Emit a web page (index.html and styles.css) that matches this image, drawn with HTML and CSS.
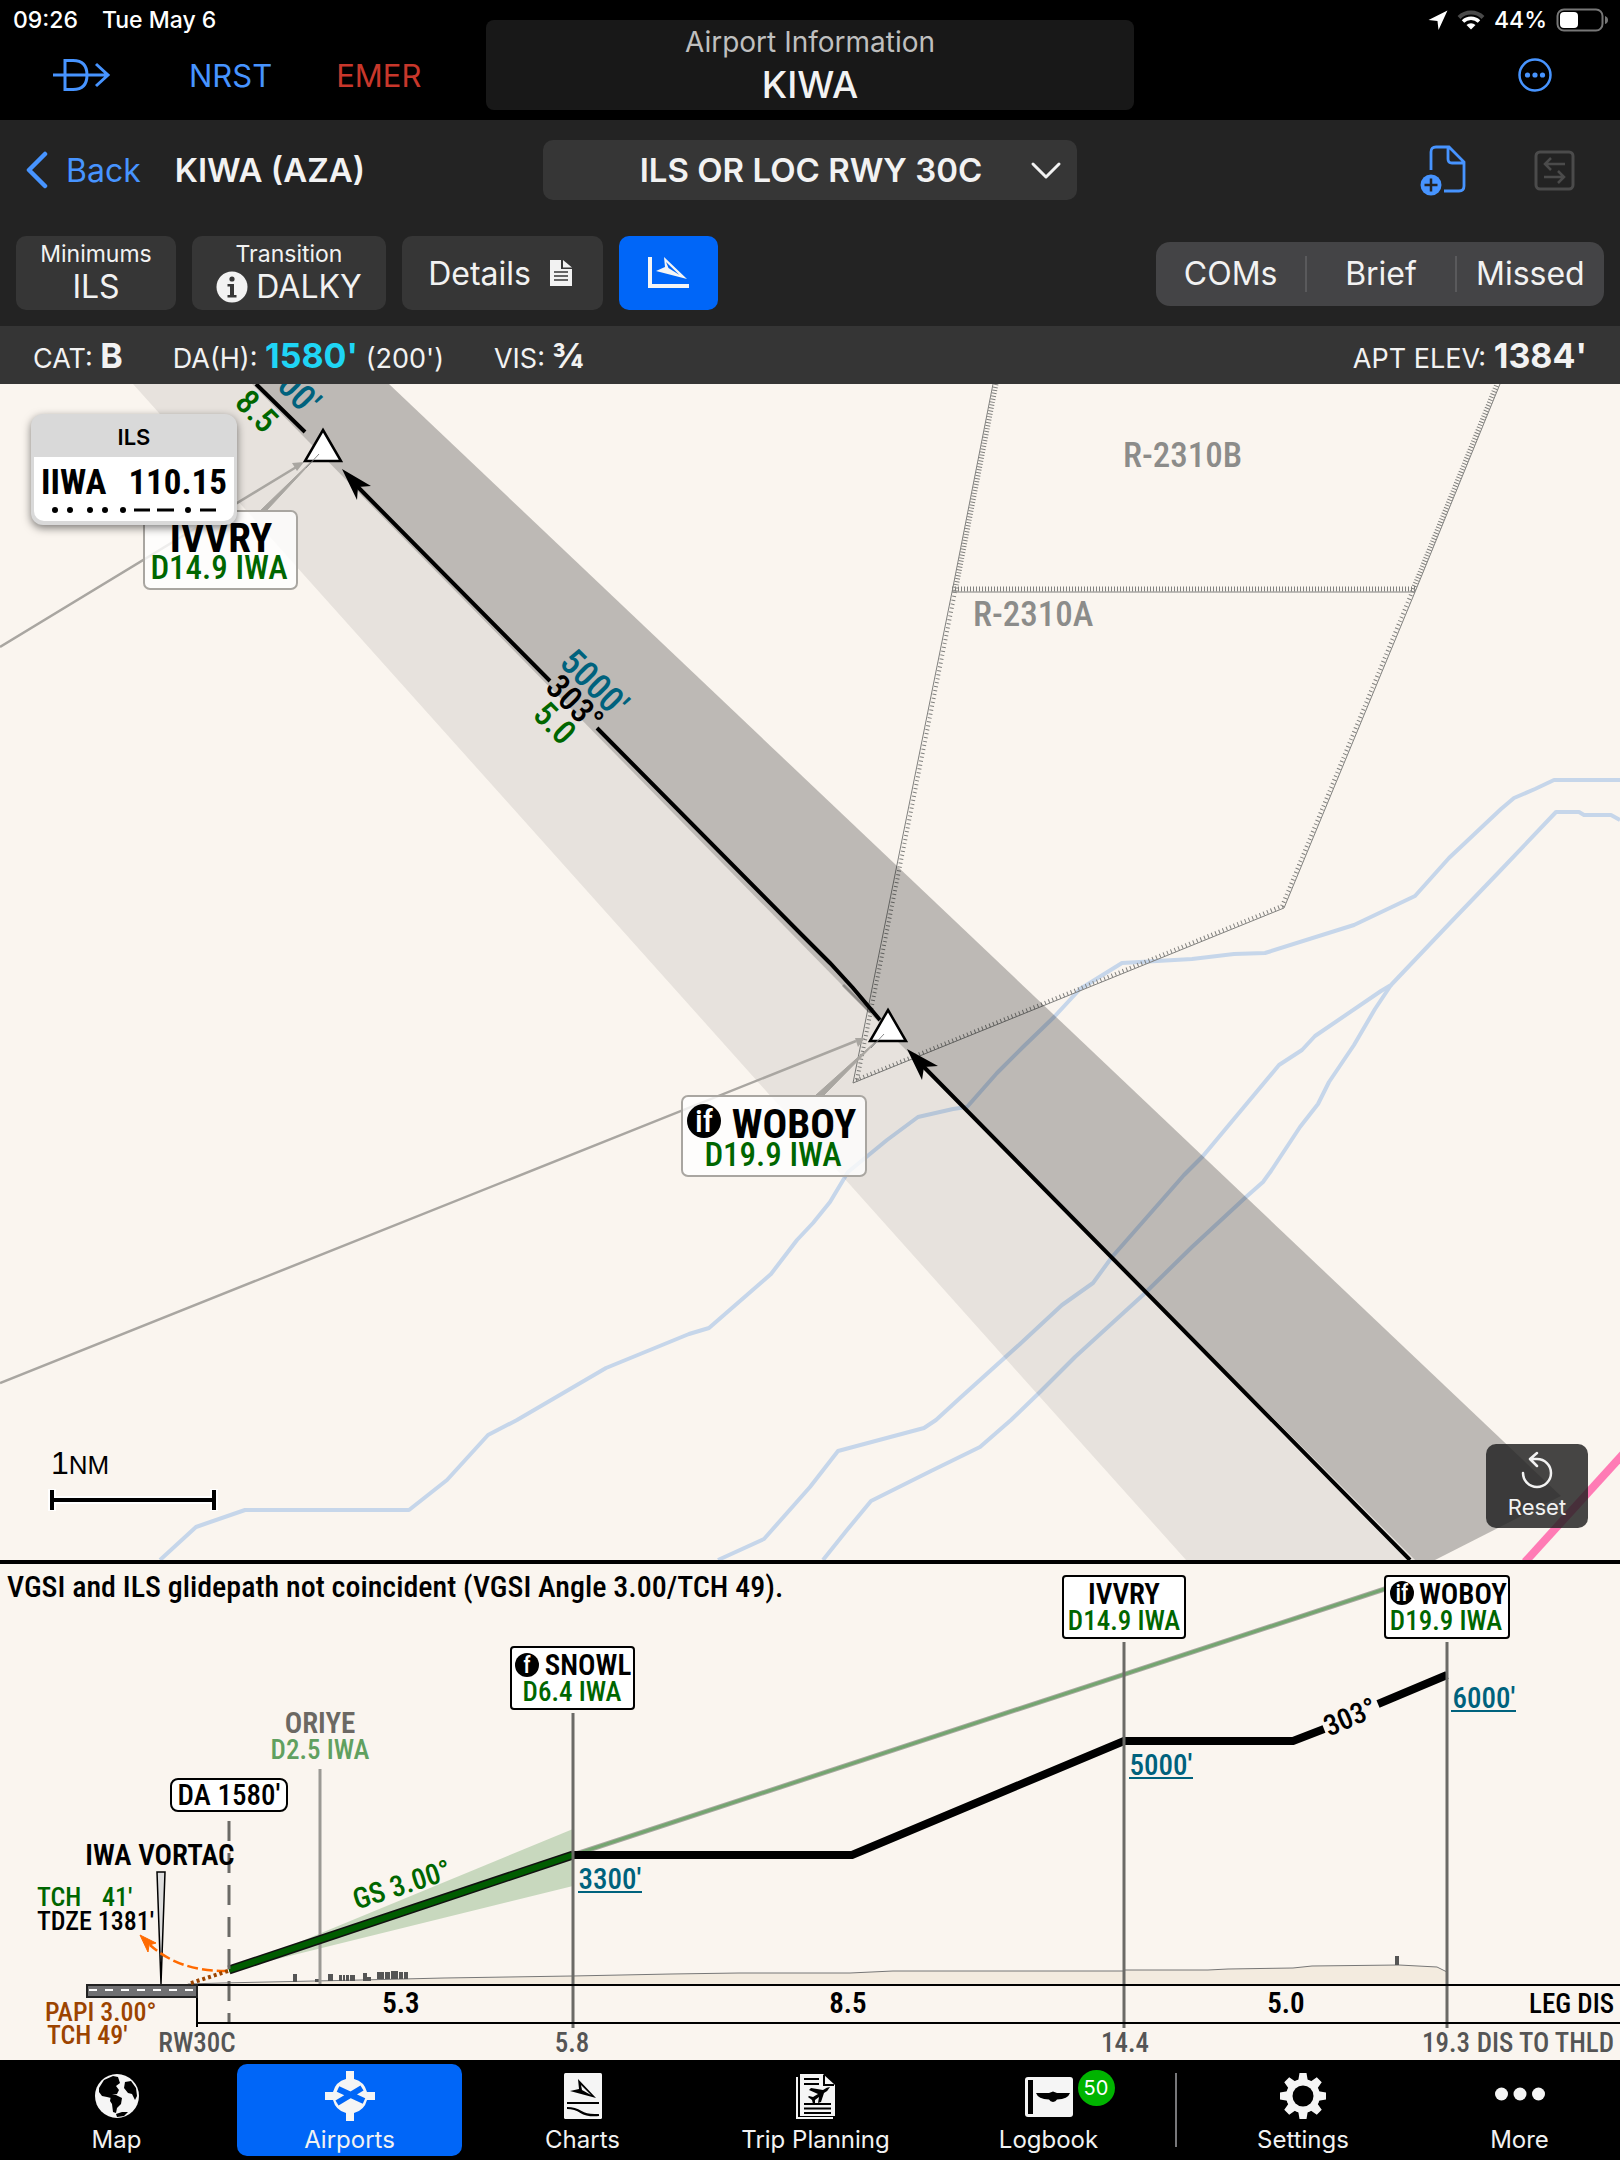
FILE: index.html
```html
<!DOCTYPE html>
<html lang="en">
<head>
<meta charset="utf-8">
<meta name="viewport" content="width=device-width, initial-scale=1">
<title>Airport Information – KIWA</title>
<link rel="stylesheet" href="styles.css">
</head>
<body>
<header class="top">
  <div class="status">
    <span class="status-time">09:26</span>
    <span class="status-date">Tue May 6</span>
    <span class="status-right">
      <svg class="ic" width="20" height="20" viewBox="0 0 19 19"><path d="M18.500.5.500 9.500l8.500 1 1 8.500z" fill="#fff"/></svg>
      <svg class="ic" width="28" height="20" viewBox="0 0 28 20"><path d="M2 7.500a17 17 0 0 1 24 0" fill="none" stroke="#4a4a4a" stroke-width="4"/><path d="M6 11.500a11.500 11.500 0 0 1 16 0" fill="none" stroke="#fff" stroke-width="3.500"/><path d="M9.500 15a6.500 6.500 0 0 1 9 0L14 19.500z" fill="#fff"/></svg>
      <span>44%</span>
      <svg class="ic" width="53" height="24" viewBox="0 0 53 24"><rect x="1.500" y="1.500" width="45" height="21" rx="6.500" fill="none" stroke="#777" stroke-width="2"/><rect x="4" y="4" width="18" height="16" rx="4" fill="#fff"/><path d="M49 8q3 1 3 4t-3 4z" fill="#777"/></svg>
    </span>
  </div>
  <div class="nav">
    <div class="nav-left">
      <button class="nav-btn direct" aria-label="Direct to"><svg width="58" height="34" viewBox="0 0 58 34" fill="none" stroke="#4794ff" stroke-width="3"><path d="M0 17h55M12 2.500h8c10 0 14 6 14 14.500S30 31.500 20 31.500h-8zM43 6l12 11-12 11"/></svg></button>
      <button class="nav-btn">NRST</button>
      <button class="nav-btn emer">EMER</button>
    </div>
    <button class="title-box"><span class="title-sub">Airport Information</span><span class="title-main">KIWA</span></button>
    <div class="nav-right">
      <button class="nav-btn" aria-label="More options"><svg width="36" height="36" viewBox="0 0 36 36"><circle cx="18" cy="18" r="15.500" fill="none" stroke="#4794ff" stroke-width="2.500"/><g fill="#4794ff"><circle cx="10.500" cy="18" r="2.600"/><circle cx="18" cy="18" r="2.600"/><circle cx="25.500" cy="18" r="2.600"/></g></svg></button>
    </div>
  </div>
</header>

<section class="tools">
  <div class="tool-row first">
    <div class="crumbs">
      <a class="back" href="#"><svg width="24" height="38" viewBox="0 0 24 38"><path d="M20 3 4 19l16 16" fill="none" stroke="#4794ff" stroke-width="4.500" stroke-linecap="round" stroke-linejoin="round"/></svg>Back</a>
      <h1 class="airport">KIWA (AZA)</h1>
    </div>
    <div class="proc">
      <select class="proc-select" aria-label="Procedure"><option>ILS OR LOC RWY 30C</option></select>
      <svg class="proc-chev" width="32" height="20" viewBox="0 0 32 20"><path d="M3 3l13 13L29 3" fill="none" stroke="#f2f2f2" stroke-width="3" stroke-linecap="round" stroke-linejoin="round"/></svg>
    </div>
    <div class="row-actions">
      <button class="icon-btn" aria-label="Add to binder"><svg width="48" height="52" viewBox="0 0 48 52"><path d="M12 25V7q0-5 5-5h13l15 15v24q0 5-5 5H25M29 3v11q0 4 4 4h11" fill="none" stroke="#4794ff" stroke-width="2.800"/><circle cx="12" cy="40" r="10.500" fill="#4794ff"/><path d="M12 33.500v13M5.500 40h13" stroke="#232323" stroke-width="2.500"/></svg></button>
      <button class="icon-btn" aria-label="Swap" disabled><svg width="42" height="42" viewBox="0 0 42 42" fill="none" stroke="#4b4b4b" stroke-width="3"><rect x="2" y="2" width="37" height="37" rx="4"/><path d="M31 14H11m6-6-6 6 6 6M10 27h20m-6-6 6 6-6 6" stroke-width="2.500"/></svg></button>
    </div>
  </div>
  <div class="tool-row second">
    <button class="chip min"><span class="chip-sub">Minimums</span><span class="chip-main">ILS</span></button>
    <button class="chip trans"><span class="chip-sub">Transition</span><span class="chip-main"><svg width="32" height="32" viewBox="0 0 32 32"><circle cx="16" cy="16" r="15.500" fill="#f2f2f2"/><circle cx="16" cy="8" r="2.600" fill="#363636"/><path d="M11.500 13H18v11h2.500v2.500h-9V24H14v-8.500h-2.500z" fill="#363636"/></svg>DALKY</span></button>
    <button class="chip details">Details<svg width="22" height="26" viewBox="0 0 22 26"><path d="M0 0h11v9h11v17H0z" fill="#f2f2f2"/><path d="M13 0l9 7.500h-9z" fill="#f2f2f2"/><path d="M4 12h14M4 16h14M4 20h14" stroke="#363636" stroke-width="1.500"/></svg></button>
    <button class="chip plate" aria-label="Profile view"><svg width="44" height="36" viewBox="0 0 44 36"><path d="M3 2v29h39" fill="none" stroke="#f5f5f5" stroke-width="4"/><path d="M17 2l23 22L9 16l9-4z" fill="#f5f5f5"/><path d="M19 7l2.500 6 11 7z" fill="#0066f8"/></svg></button>
    <div class="segments"><button>COMs</button><button>Brief</button><button>Missed</button></div>
  </div>
</section>

<section class="minima">
  <span>CAT: <b>B</b></span>
  <span>DA(H): <b class="cyan">1580'</b> (200')</span>
  <span>VIS: <b>¾</b></span>
  <span class="elev">APT ELEV: <b>1384'</b></span>
</section>

<main class="plate-view">
<section class="map">
<svg class="canvas" viewBox="0 384 1620 1176" role="img" aria-label="Approach plan view">
  <rect y="384" width="1620" height="1176" fill="#faf5ef"/>
  <g class="river">
    <path d="M1620 780H1554L1535 789 1514 798 1501 809 1449 858 1415 896 1354 925 1265 953 1234 954 1192 959 1122 963 1080 989 1054 1017 1023 1047 997 1073 967 1107 953 1109 918 1117 887 1140 848 1172 830 1202 813 1223 797 1240 771 1274 709 1328 689 1334 606 1368 517 1420 488 1435 447 1480 409 1510H245L196 1527 160 1560"/>
    <path d="M1620 820 1611 815H1584L1579 812H1556L1498 873 1449 924 1391 985 1381 991 1315 1036 1302 1050 1279 1065 1203 1156 1184 1175 1112 1257 1093 1283 1062 1305 1020 1344 960 1398 936 1420 924 1428 838 1451 810 1487 764 1539 718 1560"/>
    <path d="M1391 985 1375 1009 1354 1045 1329 1082 1318 1104 1300 1127 1271 1171 1263 1182 1246 1197 1192 1247 1143 1295 1075 1357 1040 1392 1011 1420 980 1447 931 1471 871 1501 847 1530 823 1560"/>
  </g>
  <path d="M1625 1452 1525 1562" stroke="#ff7bb5" stroke-width="8"/>
  <g class="airspace">
    <path d="M993 384 952 592 853 1083 1284 908 1415 592 1500 384M952 592H1415"/>
    <path class="ticks" d="M996 384 955 592M1412 592 1497 384M952 589H1415"/>
    <path class="ticks sparse" d="M955 592 857 1080M856 1080 1282 906 1412 592"/>
  </g>
  <path d="M133 384 1186 1560H1415L888 1032 252 384z" fill="#000" fill-opacity=".075"/>
  <path d="M389 384 1561 1496 1435 1560H1415L888 1032 252 384z" fill="#000" fill-opacity=".245"/>
  <g fill="#a9a6a1" stroke="#a9a6a1">
    <path d="M0 647 298 466M0 1383 856 1041" stroke-width="2.500" fill="none"/>
    <path d="M304 462l-7 9-5-8zM865 1038l-7 9-3-9z" stroke="none"/>
    <path d="M261 510l6 0 52-56zM816 1095l8 0 60-61z" stroke-width="1"/>
  </g>
  <rect class="tag" x="144" y="511" width="153" height="78" rx="6"/>
  <text class="c fix" x="221" y="552">IVVRY</text>
  <text class="c dme" x="219" y="579">D14.9 IWA</text>
  <rect class="tag" x="682" y="1096" width="184" height="80" rx="6"/>
  <circle cx="704" cy="1121" r="17"/>
  <text class="c badge-l" x="704" y="1132">if</text>
  <text class="c fix" x="794" y="1138">WOBOY</text>
  <text class="c dme" x="773" y="1166">D19.9 IWA</text>

  <path d="M843 985 870 1012" stroke="#000" stroke-opacity=".25" stroke-width="3"/>
  <path d="M256 384 305 432M352 481 550 681M597 728 800 933 830 963 853 988 880 1020M918 1061 1410 1560" fill="none" stroke="#000" stroke-width="4"/>
  <path d="M342 469l29 17-13 1-1 13zM907 1049l31 17-14 1-2 13z"/>
  <g fill="#fff" stroke="#000" stroke-width="2.500"><path d="M323 430 341 461H305zM888 1010 906 1041H870z"/></g>
  <path d="M319 454l-13 14M884 1034l-13 14" stroke="#888" stroke-width="1"/>

  <g class="leg">
    <text class="alt" transform="translate(594 683) rotate(45)" y="12">5000'</text>
    <text transform="translate(575 703) rotate(45)" y="12">303°</text>
    <text class="dist" transform="translate(555 723) rotate(45)" y="12">5.0</text>
    <text class="alt" transform="translate(286 381) rotate(45)" y="12">5000'</text>
    <text class="dist" transform="translate(257 411) rotate(45)" y="12">8.5</text>
  </g>
  <text class="zone" x="1123" y="467">R-2310B</text>
  <text class="zone" x="973" y="626">R-2310A</text>
  <g stroke="#fff" stroke-width="8"><path d="M50 1500H216M52 1489v22M214 1489v22"/></g>
  <path d="M50 1500H216M52 1490v20M214 1490v20" stroke="#000" stroke-width="4"/>
  <text class="scale" x="51" y="1474">1<tspan class="scale-u">NM</tspan></text>
</svg>
<aside class="navaid">
  <h2>ILS</h2>
  <div class="navaid-body">
    <p><span>IIWA</span><span>110.15</span></p>
    <svg width="166" height="8" viewBox="0 0 166 8"><g><circle cx="4" cy="4" r="3"/><circle cx="19" cy="4" r="3"/><circle cx="39" cy="4" r="3"/><circle cx="54" cy="4" r="3"/><circle cx="72" cy="4" r="3"/><circle cx="137" cy="4" r="3"/></g><path d="M83 4h16M106 4h17M149 4h16" stroke="#000" stroke-width="3"/></svg>
  </div>
</aside>
<button class="reset"><svg width="36" height="40" viewBox="0 0 36 40" fill="none" stroke="#f2f2f2" stroke-width="2.500" stroke-linecap="round" stroke-linejoin="round"><path d="M4 22a14 14 0 1 0 14-14h-6M18 2l-7 6 7 7"/></svg>Reset</button>
</section>

<section class="profile">
<svg class="canvas" viewBox="0 1564 1620 496" role="img" aria-label="Approach profile view">
  <rect y="1564" width="1620" height="496" fill="#faf5ef"/>
  <text class="c note" x="7" y="1597">VGSI and ILS glidepath not coincident (VGSI Angle 3.00/TCH 49).</text>
  <path d="M188 1984 222 1983 361 1980 444 1978 572 1976 671 1974 739 1973 850 1973 893 1971H1124V1970H1208L1228 1969 1293 1968 1312 1966 1399 1965 1437 1967 1447 1972V1984z" fill="#f3ebdf"/>
  <path d="M188 1984 222 1983 361 1980 444 1978 572 1976 671 1974 739 1973 850 1973 893 1971H1124V1970H1208L1228 1969 1293 1968 1312 1966 1399 1965 1437 1967 1447 1972" fill="none" stroke="#777" stroke-width="1"/>
  <path d="M293 1974h4v8h-4zM315 1979h4v3h-4zM328 1974h5v7h-5zM339 1975h3v6h-3zM343 1975h2v6h-2zM346 1975h3v6h-3zM350 1975h5v6h-5zM363 1973h4v4h4v4h-8zM377 1972h7v7h-7zM385 1972h5v7h-5zM391 1971h7v8h-7zM399 1972h4v7h-4zM404 1972h4v7h-4zM1395 1956h4v9h-4z" fill="#555"/>
  <path d="M229 1971 573 1829V1886z" fill="#c8d8be"/>
  <path d="M320 1769V1984" stroke="#9b9994" stroke-width="3"/>
  <path d="M573 1855 1400 1584" stroke="#a9a9a0" stroke-width="5"/>
  <path d="M573 1855 1400 1584" stroke="#74a570" stroke-width="3"/>
  <path d="M573 1855H852L1124 1741H1293L1324 1729M1378 1704 1447 1675" fill="none" stroke="#000" stroke-width="8"/>
  <path d="M229 1970 573 1855" stroke="#111" stroke-width="9"/>
  <path d="M229 1970 573 1855" stroke="#005c00" stroke-width="6"/>
  <path d="M573 1713V2028M1124 1642V2028M1447 1642V2028" stroke="#6b6a66" stroke-width="3"/>
  <path d="M229 1821V2023" stroke="#6b6a66" stroke-width="3" stroke-dasharray="20 12"/>
  <path d="M197 2027V1985H1620M197 2023H1620" fill="none" stroke="#000" stroke-width="2"/>
  <rect x="87" y="1985" width="110" height="12" fill="#707072" stroke="#222" stroke-width="2"/>
  <path d="M89 1990h106" stroke="#fff" stroke-width="2" stroke-dasharray="8 8"/>
  <path d="M157 1872h8l-4 112z" fill="#ddd" stroke="#000" stroke-width="1.500"/>
  <path d="M228 1971Q180 1972 150 1945" fill="none" stroke="#ff6a00" stroke-width="2.500" stroke-dasharray="11 4"/>
  <path d="M140 1935l16 8-7 2-1 7z" fill="#ff6a00" stroke="#ff6a00"/>
  <path d="M228 1971 188 1984" stroke="#9c4400" stroke-width="4" stroke-dasharray="3 3"/>

  <g class="box"><rect x="511" y="1647" width="123" height="62" rx="3"/><rect x="1063" y="1576" width="122" height="62" rx="3"/><rect x="1385" y="1576" width="124" height="62" rx="3"/><rect x="171" y="1779" width="116" height="32" rx="7" stroke-width="2.500"/></g>
  <circle cx="527" cy="1665" r="12"/><circle cx="1402" cy="1593" r="12"/>
  <text class="c badge-s" x="527" y="1673">f</text>
  <text class="c badge-s" x="1402" y="1601">if</text>
  <g class="pf">
    <text x="588" y="1675">SNOWL</text><text x="1124" y="1604">IVVRY</text><text x="1463" y="1604">WOBOY</text>
    <text class="dim" x="320" y="1733">ORIYE</text>
    <text x="160" y="1865">IWA VORTAC</text>
    <text x="401" y="2013">5.3</text><text x="848" y="2013">8.5</text><text x="1286" y="2013">5.0</text>
  </g>
  <g class="pn">
    <text x="229" y="1805">DA 1580'</text>
    <text class="g" transform="translate(405 1894) rotate(-18)">GS 3.00°</text>
    <text transform="translate(1354 1726) rotate(-23)">303°</text>
    <text class="b" x="610" y="1889">3300'</text><text class="b" x="1161" y="1775">5000'</text><text class="b" x="1484" y="1708">6000'</text>
  </g>
  <path d="M578 1892h64M1129 1778h64M1451 1711h65" stroke="#00627d" stroke-width="2"/>
  <g class="pd">
    <text class="g" x="572" y="1701">D6.4 IWA</text><text class="g" x="1124" y="1630">D14.9 IWA</text><text class="g" x="1446" y="1630">D19.9 IWA</text>
    <text class="g2" x="320" y="1759">D2.5 IWA</text>
    <text class="end" x="1614" y="2013">LEG DIS</text>
    <g class="t"><text x="197" y="2052">RW30C</text><text x="572" y="2052">5.8</text><text x="1125" y="2052">14.4</text><text x="1446" y="2052">19.3</text><text class="end" x="1614" y="2052">DIS TO THLD</text></g>
  </g>
  <g class="ps">
    <text class="g" x="37" y="1906">TCH</text><text class="g" x="102" y="1906">41'</text>
    <text x="37" y="1930">TDZE 1381'</text>
    <text class="p" x="45" y="2021">PAPI 3.00°</text><text class="p" x="47" y="2044">TCH 49'</text>
  </g>
</svg>
</section>
</main>

<nav class="tabs">
  <a href="#"><svg width="46" height="46" viewBox="0 0 46 46"><circle cx="23" cy="23" r="22" fill="#f5f5f5"/><path d="M5 15 10 7l9-4 5 1 2 6-4 3 3 4-2 4-5 1-1 3-4-1-5-1-3-4zM31 9l6-1 5 7 1 8-2 4-3-6-4-1-4-5zM17 22l5 0 6 3-1 6-4 4-1 5-3-1-1-8-2-3zM22 41l6-2 6 0-4 4-7 1z" fill="#000"/></svg>Map</a>
  <a href="#" class="on"><svg width="50" height="50" viewBox="0 0 50 50"><path d="M21 0h8v8a18 18 0 0 1 13 13h8v8h-8a18 18 0 0 1-13 13v8h-8v-8A18 18 0 0 1 8 29H0v-8h8A18 18 0 0 1 21 8z" fill="#f5f5f5"/><path d="M13 18l26 12M12 32l25-15" stroke="#0066f8" stroke-width="6"/></svg>Airports</a>
  <a href="#"><svg width="38" height="46" viewBox="0 0 38 46"><rect width="38" height="46" rx="1.500" fill="#f5f5f5"/><path d="M14 6l18 19-26-7 9-2z" fill="#000"/><path d="M17 12l1 5 9 5z" fill="#f5f5f5"/><path d="M3 30h32M3 35q8 0 14 4t18 3" fill="none" stroke="#000" stroke-width="2.200"/></svg>Charts</a>
  <a href="#"><svg width="40" height="46" viewBox="0 0 40 46"><path d="M1 4v41h36" fill="none" stroke="#f5f5f5" stroke-width="2"/><path d="M4 1h23l12 11v31H4z" fill="#f5f5f5"/><path d="M28 2v10h10" fill="none" stroke="#000" stroke-width="2"/><path d="M8 6h15M8 11h15M8 31h27M8 35.500h27M8 40h27" stroke="#000" stroke-width="2"/><path d="M34 14q-3 0-7 3l-12-2-2 2 9 4-5 3-4-1-1 1 4 3 1 4 2-1v-3l4-3-1 6 3-1 3-9q4-2 6-6z" fill="#000"/></svg>Trip Planning</a>
  <a href="#" class="log"><span class="log-ic"><svg width="48" height="40" viewBox="0 0 48 40"><rect width="48" height="40" rx="3" fill="#f5f5f5"/><path d="M5.500 3v34" stroke="#000" stroke-width="5"/><path d="M11 16h13l4-1.500 4 1.500h13q-2 6-13 6.500a4.500 4.500 0 0 1-8 0q-11-.5-13-6.500z" fill="#000"/></svg><span class="count">50</span></span>Logbook</a>
  <span class="rule"></span>
  <a href="#"><svg width="46" height="46" viewBox="-23 -23 46 46"><g fill="#f5f5f5"><circle r="17"/><g id="teeth"><path d="M-5 -14l1.500-9h7L5-14zM-5 14l1.500 9h7L5 14zM-14-5l-9 1.500v7L-14 5zM14-5l9 1.500v7L14 5z"/></g><use href="#teeth" transform="rotate(45)"/></g><circle r="10.500" fill="#000"/></svg>Settings</a>
  <a href="#"><svg width="52" height="46" viewBox="0 0 52 46" fill="#f5f5f5"><circle cx="7.500" cy="21" r="6.500"/><circle cx="26" cy="21" r="6.500"/><circle cx="44.500" cy="21" r="6.500"/></svg>More</a>
</nav>
</body>
</html>
```
FILE: styles.css
```css
* { box-sizing: border-box; }

body {
  margin: 0;
  min-height: 100vh;
  display: flex;
  flex-direction: column;
  background: #000;
  color: #f2f2f2;
  font-family: Inter, "Liberation Sans", sans-serif;
  font-size: 32px;
}

button, select {
  border: 0;
  padding: 0;
  margin: 0;
  background: none;
  color: inherit;
  font: inherit;
}

a { color: inherit; text-decoration: none; }
svg { display: block; flex: none; }

/* status bar and global navigation */
.top { position: relative; height: 120px; }

.status {
  display: flex;
  align-items: center;
  gap: 24px;
  height: 40px;
  padding: 0 11px 0 13px;
  color: #fff;
  font-size: 23px;
  font-weight: 500;
}

.status-right { display: flex; align-items: center; gap: 9px; margin-left: auto; }

.nav {
  position: absolute;
  inset: 20px 0 10px;
  display: grid;
  grid-template-columns: 1fr 40% 1fr;
}

.nav-left { display: flex; align-items: center; gap: 64px; padding: 20px 0 0 53px; height: 90px; color: #4794ff; font-size: 31px; }
.direct { margin-right: 14px; }
.emer { color: #c8372b; }
.nav-right { display: flex; align-items: flex-start; justify-content: flex-end; padding: 37px 67px 0 0; height: 90px; }

.title-box {
  display: flex;
  flex-direction: column;
  align-items: center;
  justify-content: center;
  border-radius: 8px;
  background: #181818;
}
.title-sub { font-size: 28px; line-height: 40px; color: #bfbfbf; }
.title-main { font-size: 37px; line-height: 46px; font-weight: 500; }

/* procedure toolbar */
.tools { background: #232323; padding: 20px 16px 16px; }

.tool-row { display: flex; align-items: center; }
.first { display: grid; grid-template-columns: 1fr 534px 1fr; height: 60px; margin-bottom: 36px; }
.crumbs { display: flex; align-items: center; gap: 34px; padding-left: 9px; }
.back { display: flex; align-items: center; gap: 17px; color: #4794ff; font-size: 32px; }
.airport { margin: 0; font-size: 33px; font-weight: 600; }

.proc { position: relative; }
.proc-select {
  appearance: none;
  width: 100%;
  height: 60px;
  padding: 0 68px 0 70px;
  border-radius: 10px;
  background: #363636;
  font-size: 33px;
  font-weight: 600;
  text-align: center;
  text-align-last: center;
}
.proc-chev { position: absolute; right: 15px; top: 21px; pointer-events: none; }

.row-actions { display: flex; align-items: center; justify-content: flex-end; gap: 67px; padding-right: 28px; padding-top: 2px; }

.second { gap: 16px; height: 74px; }
.chip {
  display: flex;
  flex-direction: column;
  align-items: center;
  justify-content: center;
  height: 74px;
  border-radius: 10px;
  background: #363636;
}
.min { width: 160px; }
.trans { width: 194px; }
.details { width: 201px; flex-direction: row; gap: 19px; padding-right: 5px; font-size: 32px; }
.plate { width: 99px; background: #0066f8; }
.chip-sub { font-size: 23px; line-height: 28px; }
.chip-main { display: flex; align-items: center; gap: 8px; font-size: 32px; line-height: 38px; }

.segments {
  display: grid;
  grid-template-columns: repeat(3, 1fr);
  align-items: center;
  width: 448px;
  height: 64px;
  margin-left: auto;
  margin-top: 2px;
  border-radius: 14px;
  background: #444446;
}
.segments button { height: 36px; font-size: 32px; line-height: 36px; }
.segments button + button { border-left: 2px solid #5a5a5c; }

/* minima strip */
.minima {
  display: flex;
  align-items: center;
  gap: 50px;
  height: 58px;
  padding: 0 33px;
  background: #353535;
  font-size: 27px;
}
.minima b { font-size: 34px; font-weight: 700; }
.minima .cyan { color: #1fd5f5; }
.elev { margin-left: auto; }

/* chart */
.plate-view { flex: 1; background: #faf5ef; color: #000; }
.canvas { width: 100%; height: auto; }
.map { position: relative; border-bottom: 4px solid #000; }

.river path { fill: none; stroke: #c6d6ea; stroke-width: 4; stroke-linejoin: round; }
.airspace path { fill: none; stroke: #80807e; stroke-width: 1; }
.airspace .ticks { stroke-width: 5; stroke-dasharray: 1 2; }
.airspace .sparse { stroke-width: 4; stroke-dasharray: 1 3; }

.c, .leg text, .zone, .pf text, .pn text, .pd text, .ps text {
  font-family: "Roboto Condensed", "Liberation Sans Narrow", Roboto, sans-serif;
  font-weight: 500;
}
.tag { fill: #fff; fill-opacity: .8; stroke: #a9a6a1; stroke-width: 2; }
.fix { font-size: 41px; font-weight: 700; text-anchor: middle; }
.dme { font-size: 33px; fill: #060; text-anchor: middle; }
.badge-l { font-size: 32px; fill: #fff; text-anchor: middle; }
.badge-s { font-size: 23px; fill: #fff; text-anchor: middle; }
.leg text { font-size: 34px; text-anchor: middle; }
.leg .alt { font-size: 36px; fill: #00627d; }
.leg .dist { fill: #060; }
.zone { font-size: 35px; fill: #8c8c8a; }
.scale { font-family: "Liberation Sans", sans-serif; font-size: 32px; }
.scale-u { font-size: 26px; }

.note { font-size: 30px; }
.box rect { fill: #fff; stroke: #000; stroke-width: 2; }
.pf text { font-size: 29px; font-weight: 600; text-anchor: middle; }
.pf .dim { fill: #6b6863; }
.pn text { font-size: 29px; text-anchor: middle; }
.pd text { font-size: 27px; text-anchor: middle; }
.pd .end { text-anchor: end; }
.ps text { font-size: 26px; }
.g, .pd .g, .ps .g { fill: #060; }
.pd .g2 { fill: #60a060; }
.pn .b { fill: #00627d; }
.pd .t text { fill: #555; }
.ps .p { fill: #9c4400; }

.navaid {
  position: absolute;
  left: 31px;
  top: 30px;
  width: 206px;
  padding: 0 3px 4px;
  border-radius: 12px;
  background: #d9d9d9;
  box-shadow: 0 3px 8px rgba(0, 0, 0, .5);
}
.navaid h2 { margin: 0; font-size: 22px; line-height: 43px; font-weight: 600; text-align: center; padding-top: 2px; height: 43px; }
.navaid-body { height: 64px; padding: 7px 7px 0; border-radius: 0 0 10px 10px; background: #fff; }
.navaid p { display: flex; justify-content: space-between; margin: 0; font-size: 35px; line-height: 38px; font-weight: 700; font-family: "Roboto Condensed", Roboto, sans-serif; }
.navaid-body svg { margin: 4px auto 0; }

.reset {
  position: absolute;
  right: 32px;
  bottom: 32px;
  display: flex;
  flex-direction: column;
  align-items: center;
  justify-content: center;
  width: 102px;
  height: 84px;
  border-radius: 10px;
  background: rgba(30, 30, 30, .82);
  color: #f2f2f2;
  font-size: 22px;
  line-height: 28px;
  gap: 2px;
}

/* tab bar */
.tabs {
  display: grid;
  grid-template-columns: repeat(5, 233fr) 22fr 232fr 201fr;
  height: 100px;
  padding: 4px 0;
  background: #000;
  font-size: 24px;
}
.tabs a {
  display: flex;
  flex-direction: column;
  align-items: center;
  justify-content: space-between;
  height: 92px;
  margin: 0 4px;
  padding: 9px 0 1px;
  border-radius: 10px;
  line-height: 30px;
}
.tabs a.on { background: #0066f8; padding-top: 7px; }
.log-ic { position: relative; padding-top: 4px; }
.count {
  position: absolute;
  left: 53px;
  top: -3px;
  width: 37px;
  height: 36px;
  border-radius: 50%;
  background: #00b400;
  color: #fff;
  font-size: 20px;
  line-height: 36px;
  text-align: center;
}
.rule { justify-self: center; width: 2px; height: 74px; margin-top: 9px; background: #77777a; }
```
